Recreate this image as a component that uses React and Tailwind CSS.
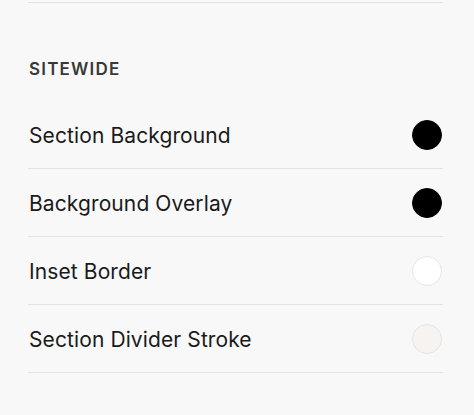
export default function App(){
  const rows = [
    { label: 'Section Background', color: 'bg-black', ring: 'border-black' },
    { label: 'Background Overlay', color: 'bg-black', ring: 'border-black' },
    { label: 'Inset Border', color: 'bg-white', ring: 'border-[#e6e6e6]' },
    { label: 'Section Divider Stroke', color: 'bg-[#f6f3f0]', ring: 'border-[#e6e4e2]' },
  ]

  return (
    <div className="w-[474px] h-[415px] bg-[#f8f8f8] overflow-hidden" style={{ fontFamily: 'Inter, "Liberation Sans", sans-serif' }}>
      <div className="mx-[28px] mr-[31px] h-[3px] border-b border-[#e2e2e2]" />
      <div className="pl-[29px] pr-[31px]">
        <h2 className="mt-[54px] h-6 leading-6 text-[17px] font-semibold tracking-[0.07em] text-[#383838]">SITEWIDE</h2>
        <div className="mt-[20px] ml-[-1px]">
          {rows.map(r => (
            <div key={r.label} className="h-[68px] flex items-center justify-between border-b border-[#e2e2e2] pl-[1px]">
              <span className="text-[21px] leading-7 pt-[2px] text-[#1a1a1a] tracking-[0.005em]">{r.label}</span>
              <span className={`w-[30px] h-[30px] rounded-full border ${r.color} ${r.ring} mr-[1px]`} />
            </div>
          ))}
        </div>
      </div>
    </div>
  )
}
